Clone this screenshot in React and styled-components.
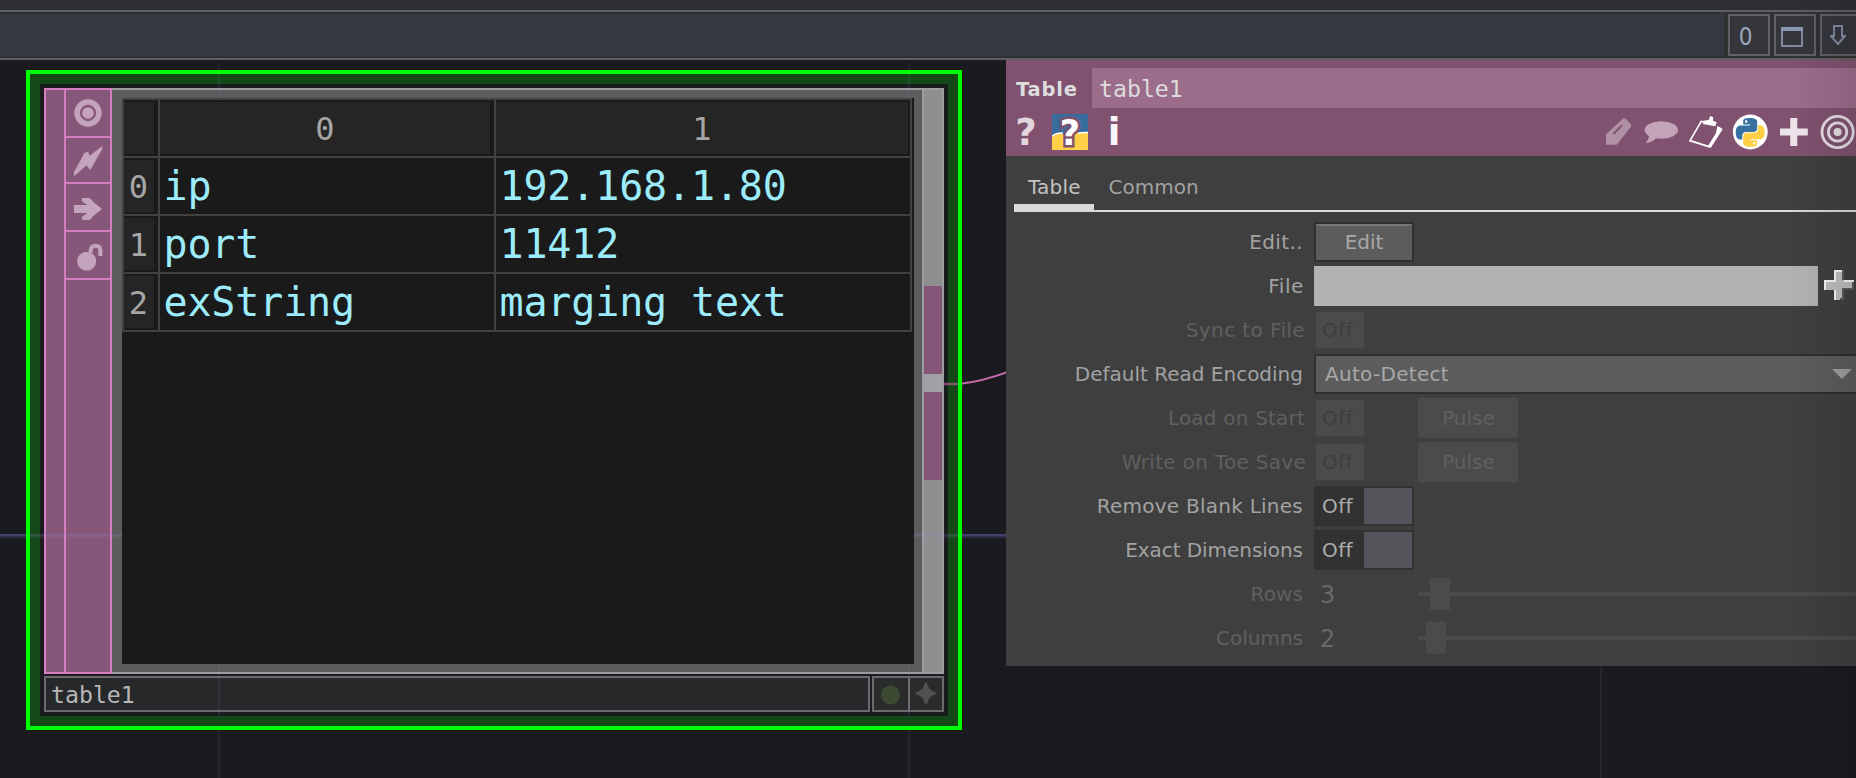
import styled, { createGlobalStyle } from 'styled-components';

const GlobalStyle = createGlobalStyle`
  * {
    box-sizing: border-box;
  }
  body {
    margin: 0;
    background: #1a1b1f;
    overflow: hidden;
  }
`

const mono = `'DejaVu Sans Mono', monospace`
const sans = `'DejaVu Sans', sans-serif`

const Screen = styled.div`
  position: relative;
  display: flex;
  flex-direction: column;
  width: 1856px;
  height: 778px;
  overflow: hidden;
  background: #1a1b1f;
  font-family: ${sans};
`

/* top bar */
const TopStrip = styled.div`
  height: 12px;
  background: #2e2f33;
  border-bottom: 2px solid #5f6064;
`

const TopBar = styled.div`
  display: flex;
  gap: 4px;
  height: 48px;
  padding: 2px 0;
  background: #303134;
  border-bottom: 2px solid #5e5e61;
`

const PathField = styled.div`
  flex: none;
  width: 1724px;
  background: #363942;
`

const BarButton = styled.div`
  flex: none;
  display: flex;
  align-items: center;
  justify-content: center;
  width: 42px;
  height: 42px;
  border: 2px solid #606164;
  background: #34363c;
  color: #9aa5bb;
  font: 24px ${sans};
  padding: 4px 6px 0 0;

  span {
    transform: scaleX(0.9);
  }
`

/* network editor */
const Network = styled.div`
  position: relative;
  flex: 1;
`

const GridV = styled.div`
  position: absolute;
  top: 2px;
  bottom: 0;
  left: ${p => p.$x}px;
  width: 2px;
  background: #24252f;

  &::after {
    content: '';
    position: absolute;
    inset: 12px 0 0;
    z-index: 2;
    background: rgba(140, 140, 200, 0.1);
    display: ${p => (p.$plain ? 'none' : 'block')};
    height: 642px;
  }
`

const GridH = styled.div`
  position: absolute;
  top: 474px;
  left: 0;
  width: 1006px;
  height: 4px;
  background: linear-gradient(#424069 50%, #2e2d49 50%);

  &::after {
    content: '';
    position: absolute;
    inset: 0 auto 0 30px;
    width: 928px;
    z-index: 2;
    background: linear-gradient(rgba(150, 140, 210, 0.2) 50%, rgba(150, 140, 210, 0.12) 50%);
  }
`

const Wire = styled.svg`
  position: absolute;
  left: 944px;
  top: 300px;
  z-index: 2;
`

const Selection = styled.div`
  position: absolute;
  left: 26px;
  top: 10px;
  width: 936px;
  height: 660px;
  padding: 4px;

  &::after {
    content: '';
    position: absolute;
    inset: 0;
    z-index: 3;
    border: 4px solid #00ff00;
  }
`

const Halo = styled.div`
  height: 652px;
  padding: 4px;
  border: 10px solid #154818;
  background: #1a1b1f;
  display: flex;
  flex-direction: column;
  gap: 2px;
`

const NodeBody = styled.div`
  display: flex;
  height: 586px;
`

const Flags = styled.div`
  display: flex;
  width: 68px;
  border: 2px solid #d67fc0;
  background: #865779;
`

const FlagList = styled.div`
  flex: 1;
  margin-left: 18px;
  border-left: 2px solid #d67fc0;
`

const Flag = styled.div`
  height: ${p => p.$h + 2}px;
  border-bottom: 2px solid #d67fc0;

  svg {
    display: block;
    fill: #c4a4bc;
  }
`

const Frame = styled.div`
  flex: 1;
  padding: 8px 8px 8px 10px;
  background: #5c5c5c;
  border: solid #9c9da1;
  border-width: 2px 0;
`

const Viewer = styled.div`
  position: relative;
  z-index: 3;
  height: 566px;
  background: #1a1a1a;
`

const Grid = styled.div`
  display: grid;
  grid-template-columns: 34px 334px 414px;
  grid-template-rows: 56px 56px 56px 56px;
  gap: 2px;
  width: 790px;
  padding: 2px;
  background: #424242;
  font-family: ${mono};
`

const HeadCell = styled.div`
  display: flex;
  align-items: center;
  justify-content: center;
  background: #252525;
  border: solid #1a1a1a;
  border-width: 2px 4px 2px 0;
  border-right-width: ${p => p.$edge || 4}px;
  color: #a6a6a6;
  font-size: 32px;
  line-height: 1;
  padding: 2px ${p => (p.$row ? 1 : 0)}px 0 0;
`

const Cell = styled.div`
  background: #1a1a1a;
  color: #9decfb;
  font-size: 40px;
  line-height: 57px;
  height: 56px;
  padding-left: 3.5px;
  letter-spacing: -0.15px;
  white-space: pre;
`

const OutputBar = styled.div`
  width: 22px;
  display: flex;
  flex-direction: column;
  gap: 18px;
  padding-top: 196px;
  border: 2px solid #9c9da1;
  background: linear-gradient(#8f8f8f 284px, #a0a1a4 284px, #a0a1a4 302px, #8f8f8f 302px);
`

const OutputHalf = styled.div`
  height: 88px;
  background: #855677;
`

const NodeFooter = styled.div`
  display: flex;
  gap: 2px;
  height: 36px;
`

const NodeName = styled.div`
  width: 826px;
  border: 2px solid #6b6b6f;
  background: #27282a;
  color: #b6b6b6;
  font: 23.2px/33px ${mono};
  padding-left: 5px;
`

const NodeButtons = styled.div`
  display: grid;
  grid-template-columns: 34px 32px;
  gap: 2px;
  width: 72px;
  height: 36px;
  padding: 2px;
  background: #6b6b6f;
`

const NodeButton = styled.div`
  height: 32px;
  background: #2a2b2b;

  svg {
    display: block;
  }
`

/* parameter window */
const Panel = styled.div`
  position: absolute;
  left: 1006px;
  top: 0;
  width: 850px;
  height: 606px;
  overflow: hidden;
  z-index: 4;
  background: #3f3f3f;
`

const PanelHeader = styled.div`
  height: 96px;
  padding-top: 8px;
  background: #80526f;
`

const TitleRow = styled.div`
  display: flex;
  height: 40px;
`

const OpType = styled.div`
  width: 86px;
  padding-left: 10px;
  color: #dedede;
  font: bold 19.5px/43px ${sans};
  letter-spacing: 0.8px;
`

const OpName = styled.div`
  flex: 1;
  padding-left: 7px;
  background: #9b6d8b;
  color: #dddbdc;
  font: 23.2px/42px ${mono};
`

const IconRow = styled.div`
  display: flex;
  gap: 8px;
  padding: 6px 0 0 2px;
`

const IconGroup = styled.div`
  display: flex;
  gap: 8px;
  margin-left: auto;
`

const Glyph = styled.div`
  width: 36px;
  height: 36px;
  display: flex;
  align-items: center;
  justify-content: center;
  padding-top: 2px;
  color: ${p => p.$color};
  font: bold 37px/36px ${sans};
`

const HelpBadge = styled.div`
  position: relative;
  width: 36px;
  height: 36px;

  svg {
    display: block;
  }
`

const HelpMark = styled.div`
  position: absolute;
  inset: 0;
  text-align: center;
  color: #fff;
  font: bold 35px/38px ${sans};
  -webkit-text-stroke: 5px #80526f;
  paint-order: stroke fill;
`

const Tabs = styled.div`
  display: flex;
  height: 56px;
  margin-left: 8px;
  border-bottom: 2px solid #d8d8d8;
`

const Tab = styled.div`
  height: 56px;
  width: ${p => p.$w}px;
  padding-left: ${p => p.$pad}px;
  border-bottom: ${p => (p.$active ? '8px solid #d8d8d8' : 'none')};
  color: ${p => (p.$active ? '#c4c4c4' : '#a2a2a2')};
  font-size: 20px;
  line-height: 62px;
  letter-spacing: ${p => p.$ls}px;
`

const Params = styled.div`
  display: flex;
  flex-direction: column;
  gap: 4px;
  padding-top: 10px;
`

const Param = styled.div`
  display: flex;
  height: 40px;
`

const Label = styled.div`
  flex: none;
  width: 308px;
  padding-right: ${p => p.$pr ?? 11}px;
  text-align: right;
  white-space: nowrap;
  color: ${p => (p.$off ? '#606060' : '#a2a2a2')};
  font-size: 20px;
  line-height: 41px;
  letter-spacing: ${p => p.$ls ?? 0.2}px;
`

const Button = styled.div`
  width: 100px;
  border: 2px solid #2f2f2f;
  background: #5c5c5c;
  box-shadow: inset 0 2px #767676;
  color: #a8a8a8;
  text-align: center;
  font-size: 20px;
  line-height: 37px;
`

const TextField = styled.div`
  width: 504px;
  background: #b2b2b2;
`

const Toggle = styled.div`
  width: 100px;
  display: flex;
  padding: 2px 2px 2px 8px;
  background: #323232;
  color: #acacac;
  font-size: 20px;
  line-height: 37px;
  letter-spacing: 0.4px;
`

const Knob = styled.div`
  margin-left: auto;
  width: 48px;
  background: #55545b;
`

const OffBox = styled.div`
  width: 48px;
  margin: 2px 0 2px 2px;
  padding-left: 6px;
  background: #4b4b4b;
  color: #3e3e3e;
  font-size: 20px;
  line-height: 37px;
  letter-spacing: 0.4px;
`

const Pulse = styled.div`
  width: 100px;
  margin-left: 54px;
  padding-left: 1px;
  background: #4b4b4b;
  color: #606060;
  text-align: center;
  font-size: 20px;
  line-height: 41px;
`

const Select = styled.div`
  flex: 1;
  display: flex;
  align-items: center;
  justify-content: space-between;
  padding: 0 4px 0 9px;
  border: 2px solid #2f2f2f;
  border-right: none;
  background: #5c5c5c;
  color: #a8a8a8;
  font-size: 20px;
  letter-spacing: 0.3px;
`

const Arrow = styled.div`
  border: 10px solid transparent;
  border-top-color: #9d9d9d;
  border-bottom: none;
`

const NumberValue = styled.div`
  width: 104px;
  padding-left: 6px;
  color: #686868;
  font: 24px/43px ${sans};
`

const Track = styled.div`
  flex: 1;
  display: flex;
  align-items: center;
  padding-left: ${p => p.$at}px;
  background: linear-gradient(#4b4b4b, #4b4b4b) 0 18px / 100% 4px no-repeat;
`

const Handle = styled.div`
  width: 20px;
  height: 32px;
  background: #4b4b4b;
`

const EdgeShade = styled.div`
  position: absolute;
  inset: 0 0 0 auto;
  width: 66px;
  z-index: 5;
  background: linear-gradient(90deg, rgba(0, 0, 0, 0), rgba(0, 0, 0, 0.1));
`

const SNAKE = 'M14.25.18l.9.2.73.26.59.3.45.32.34.34.25.34.16.33.1.3.04.26.02.2-.01.13V8.5l-.05.63-.13.55-.21.46-.26.38-.3.31-.33.25-.35.19-.35.14-.33.1-.3.07-.26.04-.21.02H8.77l-.69.05-.59.14-.5.22-.41.27-.33.32-.27.35-.2.36-.15.37-.1.35-.07.32-.04.27-.02.21v3.06H3.17l-.21-.03-.28-.07-.32-.12-.35-.18-.36-.26-.36-.36-.35-.46-.32-.59-.28-.73-.21-.88-.14-1.05-.05-1.23.06-1.22.16-1.04.24-.87.32-.71.36-.57.4-.44.42-.33.42-.24.4-.16.36-.1.32-.05.24-.01h.16l.06.01h8.16v-.83H6.18l-.01-2.75-.02-.37.05-.34.11-.31.17-.28.25-.26.31-.23.38-.2.44-.18.51-.15.58-.12.64-.1.71-.06.77-.04.84-.02 1.27.05zm-6.3 1.98l-.23.33-.08.41.08.41.23.34.33.22.41.09.41-.09.33-.22.23-.34.08-.41-.08-.41-.23-.33-.33-.22-.41-.09-.41.09z'

const PythonIcon = () => (
  <svg width="36" height="36" viewBox="0 0 36 36">
    <circle cx="18.3" cy="18" r="17.4" fill="#fff" />
    <g transform="translate(3.8 4) scale(1.2)">
      <path d={SNAKE} fill="#3771a1" />
      <path d={SNAKE} fill="#ffd045" transform="rotate(180 12 12)" />
    </g>
  </svg>
)

const PythonHelp = () => (
  <HelpBadge>
    <svg width="36" height="36" viewBox="0 0 36 36">
      <rect width="36" height="36" fill="#366d9c" />
      <path d="M0 23C5 18 9 21 14 20S26 19 36 18V36H0z" fill="#ffd048" />
      <path d="M0 22.5C4 18.5 7 19 11 19M26 19.5c3-1.5 6-1 10-1" stroke="#fff" strokeWidth="1.5" fill="none" />
    </svg>
    <HelpMark>?</HelpMark>
  </HelpBadge>
)

const PencilIcon = () => (
  <svg width="36" height="36" viewBox="0 0 108 108">
    <path d="M18 61L68 14Q73 11 78 16L92 30Q96 34 92 40L50 92H18z" fill="#b090a5" />
    <path d="M40 60L66 34" stroke="#80526f" strokeWidth="6" />
  </svg>
)

const CommentIcon = () => (
  <svg width="36" height="36" viewBox="0 0 108 108">
    <ellipse cx="52" cy="48" rx="50" ry="26" fill="#c2a3b8" />
    <path d="M14 60Q17 76 4 87Q28 86 38 70z" fill="#c2a3b8" />
  </svg>
)

const ClipboardIcon = () => (
  <svg width="36" height="36" viewBox="0 0 108 108">
    <path d="M41 20L6 80L63 98L98 44L88 39M38 24L52 22" fill="none" stroke="#fff" strokeWidth="5" />
    <path d="M88 37L104 46L68 102L60 96L84 57z" fill="#fff" />
    <path d="M66 6L76 10L75 20L86 25L82 37L44 30L50 20L63 17z" fill="#fff" />
  </svg>
)

const PlusIcon = () => (
  <svg width="36" height="36" viewBox="0 0 36 36">
    <path d="M14.300 4h7v10.600h10.500v7H21.300V32h-7V21.600H4v-7h10.300z" fill="#eee5eb" />
  </svg>
)

const TargetIcon = () => (
  <svg width="36" height="36" viewBox="0 0 36 36" fill="none" stroke="#e6dde3" strokeWidth="2.8">
    <circle cx="17.6" cy="18" r="15.6" />
    <circle cx="17.6" cy="18" r="9.2" />
    <circle cx="17.6" cy="18" r="4" fill="#e6dde3" stroke="none" />
  </svg>
)

const BevelPlus = () => (
  <svg width="38" height="40" viewBox="0 0 38 40">
    <path d="M16 4h10v10h10v10H26v10H16V24H6V14h10z" fill="#5a5a5a" />
    <path d="M16 4h8v10h10v8H24v10h-2v2h-6V24H6V14h10z" fill="#bebebe" />
    <path d="M17 34V24M7 24V15h10V5h7M26 15h10" fill="none" stroke="#f6f6f6" strokeWidth="2" />
  </svg>
)

const rows = [
  ['ip', '192.168.1.80'],
  ['port', '11412'],
  ['exString', 'marging text'],
]

const TableNode = () => (
  <Selection>
    <Halo>
      <NodeBody>
        <Flags>
          <FlagList>
            <Flag $h={46}>
              <svg width="44" height="46" viewBox="0 0 132 138">
                <circle cx="66" cy="69" r="41" />
                <circle cx="66" cy="69" r="21" fill="none" stroke="#865779" strokeWidth="7" />
              </svg>
            </Flag>
            <Flag $h={44}>
              <svg width="44" height="44" viewBox="0 0 132 132">
                <path d="M109 24V33L73 96L62 82L24 115V103L55 45L66 41L71 53z" />
              </svg>
            </Flag>
            <Flag $h={46}>
              <svg width="44" height="46" viewBox="0 0 132 138">
                <path d="M24 63H64L48 52V42H70Q78 47 82 54L108 75L82 96Q78 104 70 108H48V98L64 87H24z" />
              </svg>
            </Flag>
            <Flag $h={46}>
              <svg width="44" height="46" viewBox="0 0 132 138">
                <circle cx="62" cy="88" r="28.5" />
                <path d="M74 62V54Q76 41 88 41Q102 41 103 54V72" fill="none" stroke="#c4a4bc" strokeWidth="12" />
              </svg>
            </Flag>
          </FlagList>
        </Flags>
        <Frame>
          <Viewer>
            <Grid>
              <HeadCell />
              <HeadCell>0</HeadCell>
              <HeadCell $edge={2}>1</HeadCell>
              {rows.map((row, i) => [
                <HeadCell key={i} $row>{i}</HeadCell>,
                ...row.map(text => <Cell key={text}>{text}</Cell>),
              ])}
            </Grid>
          </Viewer>
        </Frame>
        <OutputBar>
          <OutputHalf />
          <OutputHalf />
        </OutputBar>
      </NodeBody>
      <NodeFooter>
        <NodeName>table1</NodeName>
        <NodeButtons>
          <NodeButton>
            <svg width="34" height="32"><circle cx="16.5" cy="17" r="9.5" fill="#3c4a34" /></svg>
          </NodeButton>
          <NodeButton>
            <svg width="32" height="32">
              <path d="M16 5Q17.500 14 26 15.500Q17.500 17 16 26Q14.500 17 6 15.500Q14.500 14 16 5z" fill="#515151" stroke="#515151" strokeWidth="2" />
            </svg>
          </NodeButton>
        </NodeButtons>
      </NodeFooter>
    </Halo>
  </Selection>
)

const ParameterPanel = () => (
  <Panel>
    <PanelHeader>
      <TitleRow>
        <OpType>Table</OpType>
        <OpName>table1</OpName>
      </TitleRow>
      <IconRow>
        <Glyph $color="#e2d5de">?</Glyph>
        <PythonHelp />
        <Glyph $color="#f8f4f7">i</Glyph>
        <IconGroup>
          <PencilIcon />
          <CommentIcon />
          <ClipboardIcon />
          <PythonIcon />
          <PlusIcon />
          <TargetIcon />
        </IconGroup>
      </IconRow>
    </PanelHeader>
    <Tabs>
      <Tab $active $w={80} $pad={14} $ls={0.2}>Table</Tab>
      <Tab $w={120} $pad={14.5} $ls={0}>Common</Tab>
    </Tabs>
    <Params>
      <Param>
        <Label $ls={0.4}>Edit..</Label>
        <Button>Edit</Button>
      </Param>
      <Param>
        <Label $pr={10} $ls={0.6}>File</Label>
        <TextField />
        <BevelPlus />
      </Param>
      <Param>
        <Label $off $pr={9} $ls={0.4}>Sync to File</Label>
        <OffBox>Off</OffBox>
      </Param>
      <Param>
        <Label $ls={0}>Default Read Encoding</Label>
        <Select>Auto-Detect<Arrow /></Select>
      </Param>
      <Param>
        <Label $off $pr={9}>Load on Start</Label>
        <OffBox>Off</OffBox>
        <Pulse>Pulse</Pulse>
      </Param>
      <Param>
        <Label $off $pr={8} $ls={0.3}>Write on Toe Save</Label>
        <OffBox>Off</OffBox>
        <Pulse>Pulse</Pulse>
      </Param>
      <Param>
        <Label $ls={0.25}>Remove Blank Lines</Label>
        <Toggle>Off<Knob /></Toggle>
      </Param>
      <Param>
        <Label $ls={-0.05}>Exact Dimensions</Label>
        <Toggle>Off<Knob /></Toggle>
      </Param>
      <Param>
        <Label $off $ls={0.1}>Rows</Label>
        <NumberValue>3</NumberValue>
        <Track $at={12}><Handle /></Track>
      </Param>
      <Param>
        <Label $off $ls={0}>Columns</Label>
        <NumberValue>2</NumberValue>
        <Track $at={8}><Handle /></Track>
      </Param>
    </Params>
  </Panel>
)

const App = () => {
  return (
    <Screen>
      <GlobalStyle />
      <TopStrip />
      <TopBar>
        <PathField />
        <BarButton><span>0</span></BarButton>
        <BarButton>
          <svg width="22" height="20">
            <path d="M1 1V19H21V1" fill="none" stroke="#8089a0" strokeWidth="2" />
            <path d="M0 0H22V4H0z" fill="#8b97b0" />
          </svg>
        </BarButton>
        <BarButton>
          <svg width="16" height="26">
            <path d="M4 2H12V12H15L8 20L1 12H4z" fill="none" stroke="#8089a0" strokeWidth="2" />
          </svg>
        </BarButton>
      </TopBar>
      <Network>
        <GridV $x={218} />
        <GridV $x={908} />
        <GridV $x={1600} $plain />
        <GridH />
        <Wire width="64" height="40">
          <path d="M0 24H18" fill="none" stroke="#c268a8" strokeOpacity="0.6" strokeWidth="2.5" />
          <path d="M18 23.500C34 22 50 17 64 12" fill="none" stroke="#c268a8" strokeWidth="2" />
        </Wire>
        <TableNode />
        <ParameterPanel />
      </Network>
      <EdgeShade />
    </Screen>
  );
};
export default App;
